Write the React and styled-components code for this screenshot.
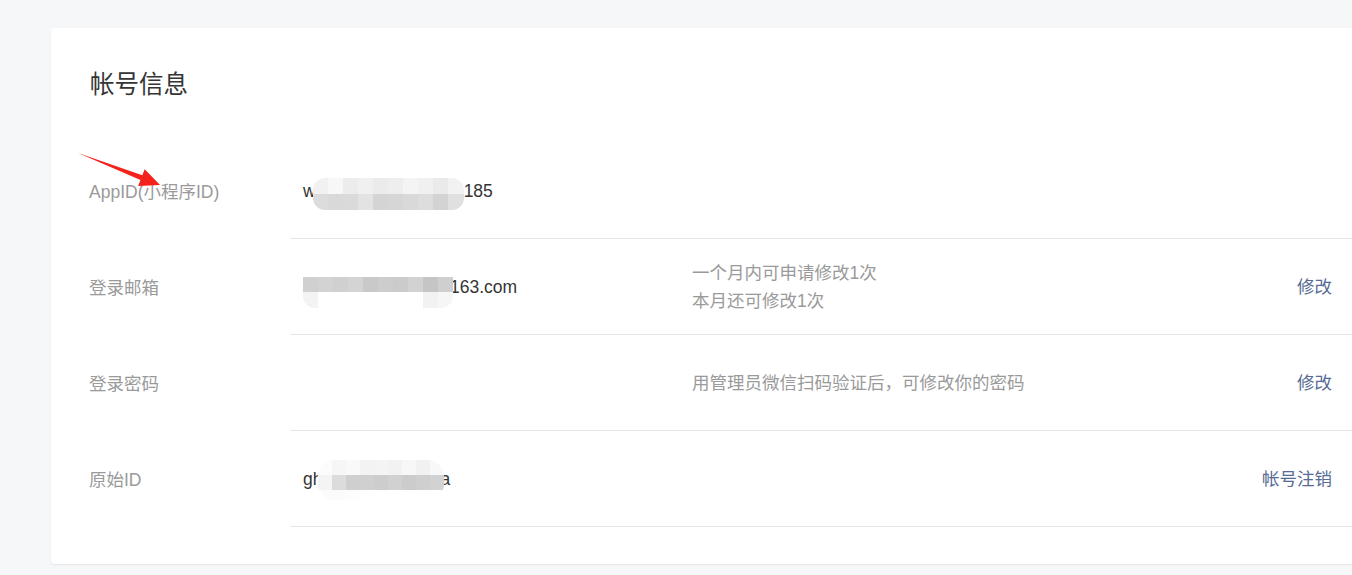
import React from 'react'
import styled, { createGlobalStyle } from 'styled-components';

const GlobalStyle = createGlobalStyle`
    html, body {
        margin: 0;
        padding: 0;
        background: #f6f7f9;
        overflow: hidden;
    }
    body {
        font-family: "Liberation Sans", "Noto Sans CJK SC", sans-serif;
        color: #353535;
    }
`

const mosaics = {
    appid: {
        width: 151, radius: '12px', dy: 3, ml: -3, mr: 0,
        rows: [
            { h: 16, cells: ['#f1f1f1', '#f7f7f7', '#ececec', '#f0f0f0', '#ebebeb', '#eeeeee', '#f4f4f4', '#f0f0f0', '#eaeaea', '#f2f2f2'] },
            { h: 16, cells: ['#dcdcdc', '#d9d9d9', '#dadada', '#e3e3e3', '#d4d4d4', '#d6d6d6', '#d9d9d9', '#dddddd', '#d3d3d3', '#e0e0e0'] },
        ],
    },
    mail: {
        width: 150, radius: '0 0 12px 12px', dy: 6, ml: 0, mr: -3,
        rows: [
            { h: 15, cells: ['#d0d0d0', '#d3d3d3', '#d0d0d0', '#d4d4d4', '#c9c9c9', '#cdcdcd', '#cbcbcb', '#d2d2d2', '#c5c5c5', '#cfcfcf'] },
            { h: 16, cells: ['#f3f3f3', '#ffffff', '#ffffff', '#ffffff', '#ffffff', '#ffffff', '#ffffff', '#ffffff', '#f2f2f2', '#f6f6f6'] },
        ],
    },
    raw: {
        width: 126, radius: '16px', dy: 1, ml: -4, mr: -4,
        rows: [
            { h: 15, cells: ['#fcfcfc', '#f6f6f6', '#f9f9f9', '#f3f3f3', '#f4f4f4', '#f2f2f2', '#f7f7f7', '#f1f1f1', '#f8f8f8'] },
            { h: 15, cells: ['#f4f4f4', '#dcdcdc', '#cfcfcf', '#d0d0d0', '#cdcdcd', '#d1d1d1', '#cccccc', '#cfcfcf', '#d2d2d2'] },
            { h: 10, cells: ['#fbfbfb', '#fbfbfb', '#fdfdfd', '#ffffff', '#ffffff', '#ffffff', '#ffffff', '#ffffff', '#ffffff'] },
        ],
    },
}

const Mosaic = ({ kind }) => {
    const m = mosaics[kind];
    return (
        <MosaicBox $w={m.width} $r={m.radius} $dy={m.dy} $ml={m.ml} $mr={m.mr}>
            {m.rows.map((row, i) => (
                <MosaicRow key={i} $h={row.h}>
                    {row.cells.map((c, j) => <Cell key={j} $c={c} />)}
                </MosaicRow>
            ))}
        </MosaicBox>
    )
}

const Arrow = () => (
    <ArrowSvg width="90" height="42" viewBox="0 0 90 42">
        <polygon points="2,3 66.3,25.3 68.7,19.2 84,35 62.1,36 64.5,29.9" fill="#f3231b" />
    </ArrowSvg>
)

const App = () => {
    return (
        <Page>
            <GlobalStyle />
            <Card>
                <Arrow />
                <Title>帐号信息</Title>
                <Row>
                    <Label>AppID(小程序ID)</Label>
                    <Content>
                        <Value>
                            <span>w</span>
                            <Mosaic kind="appid" />
                            <span>185</span>
                        </Value>
                    </Content>
                </Row>
                <Row>
                    <Label>登录邮箱</Label>
                    <Content>
                        <Value>
                            <Mosaic kind="mail" />
                            <span>163.com</span>
                        </Value>
                        <Desc>一个月内可申请修改1次<br />本月还可修改1次</Desc>
                        <Link>修改</Link>
                    </Content>
                </Row>
                <Row>
                    <Label>登录密码</Label>
                    <Content>
                        <Value />
                        <Desc>用管理员微信扫码验证后，可修改你的密码</Desc>
                        <Link>修改</Link>
                    </Content>
                </Row>
                <Row>
                    <Label>原始ID</Label>
                    <Content>
                        <Value>
                            <span>gh</span>
                            <Mosaic kind="raw" />
                            <span>a</span>
                        </Value>
                        <Desc />
                        <Link>帐号注销</Link>
                    </Content>
                </Row>
            </Card>
        </Page>
    )
}

export default App;

const Page = styled.div`
    padding: 28px 0 0 51px;
    width: 1352px;
    height: 575px;
    box-sizing: border-box;
`

const Card = styled.div`
    position: relative;
    width: 1321px;
    box-sizing: border-box;
    background: #fff;
    border-radius: 4px;
    box-shadow: 0 1px 2px rgba(0, 0, 0, 0.08);
    padding: 40px 0 37px 38px;
`

const ArrowSvg = styled.svg`
    position: absolute;
    left: 25px;
    top: 122px;
    z-index: 2;
`

const Title = styled.h2`
    margin: 0 0 41px 1px;
    font-size: 24.5px;
    font-weight: 400;
    line-height: 34px;
    color: #353535;
`

const Row = styled.div`
    display: grid;
    grid-template-columns: 201px 1fr;
    height: 96px;
`

const Label = styled.div`
    display: flex;
    align-items: center;
    padding-bottom: 1px;
    font-size: 17.5px;
    color: #9a9a9a;
`

const Content = styled.div`
    display: flex;
    align-items: center;
    padding: 0 40px 0 13px;
    border-bottom: 1px solid #e6e6e6;
    font-size: 17.5px;
`

const Value = styled.div`
    width: 389px;
    flex-shrink: 0;
    display: flex;
    align-items: center;
    color: #353535;
    line-height: 28px;
`

const MosaicBox = styled.div`
    width: ${p => p.$w}px;
    margin: 0 ${p => p.$mr}px 0 ${p => p.$ml}px;
    border-radius: ${p => p.$r};
    overflow: hidden;
    transform: translateY(${p => p.$dy}px);
    position: relative;
    z-index: 1;
`

const MosaicRow = styled.div`
    display: flex;
    height: ${p => p.$h}px;
`

const Cell = styled.div`
    flex: 1;
    background: ${p => p.$c};
`

const Desc = styled.div`
    flex: 1;
    color: #9a9a9a;
    line-height: 28px;
`

const Link = styled.a`
    color: #576b95;
    cursor: pointer;
    line-height: 28px;
`
